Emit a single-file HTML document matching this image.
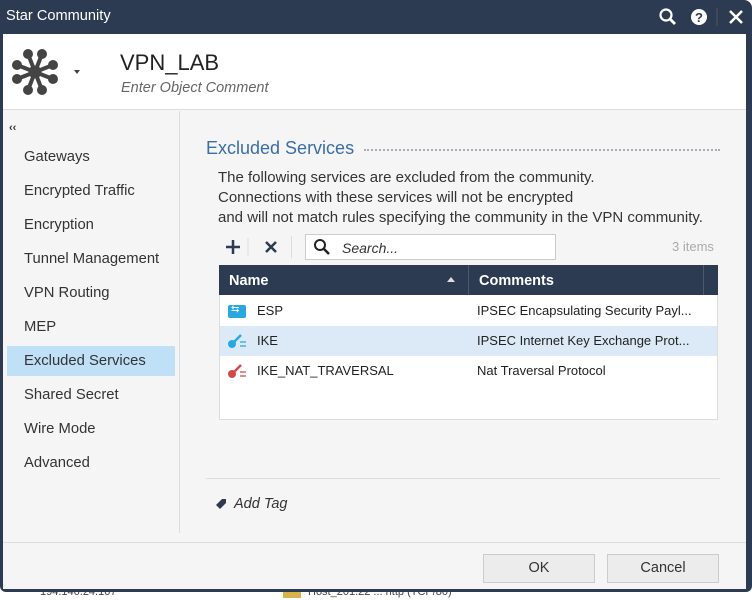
<!DOCTYPE html>
<html><head><meta charset="utf-8"><style>
*{margin:0;padding:0;box-sizing:border-box}
body{width:752px;height:600px;overflow:hidden;background:#fff;font-family:"Liberation Sans",sans-serif;position:relative;color:#222}
.abs{position:absolute}
.frame{left:0;top:0;width:752px;height:592px;background:#2c3b51;border-radius:0 8px 6px 6px}
.title{left:6px;top:8px;color:#fff;font-size:14.6px}
.body{left:3px;top:34px;width:743px;height:555px;background:#f5f5f5}
.hdr{left:3px;top:34px;width:743px;height:76px;background:#fff;border-bottom:1px solid #ddd}
.side{left:3px;top:111px;width:177px;height:422px;border-right:1px solid #ddd}
.nav{left:7px;width:168px;height:30px;font-size:14.8px;padding-left:17px;line-height:30px;color:#333}
.sel{background:#bfe0f7}
.txt{font-size:15px;color:#333;line-height:20px}
.tb{left:219px;top:265px;width:499px;height:155px;background:#fff;border:1px solid #ddd}
.th{left:219px;top:265px;width:499px;height:30px;background:#2c3b51;color:#fff;font-weight:bold;font-size:14.5px}
.row{left:220px;width:497px;height:30px;font-size:13px;line-height:30px}
.btn{top:554px;width:112px;height:29px;background:#ececec;border:1px solid #ccc;font-size:14.5px;text-align:center;line-height:27px;color:#333}
</style></head><body>
<div class="abs" style="left:0;top:592px;width:752px;height:8px;background:#fff;font-size:11px;color:#444;overflow:hidden"><span style="position:absolute;left:40px;top:-6px">194.146.24.107</span><span style="position:absolute;left:283px;top:-4px;width:18px;height:10px;background:#d9b24a"></span><span style="position:absolute;left:308px;top:-6px">Host_201.22 ... http (TCP/80)</span></div>
<div class="abs frame"></div>
<div class="abs title">Star Community</div>
<svg class="abs" style="left:658px;top:7px" width="90" height="20" viewBox="0 0 90 20">
<circle cx="8" cy="8" r="5.5" fill="none" stroke="#fff" stroke-width="2.2"/><line x1="12" y1="12" x2="17" y2="17" stroke="#fff" stroke-width="2.8"/>
<circle cx="41" cy="10" r="8" fill="#fff"/><text x="41" y="15" text-anchor="middle" font-family="Liberation Sans" font-weight="bold" font-size="13" fill="#2c3b51">?</text>
<line x1="59" y1="1" x2="59" y2="19" stroke="#556" stroke-width="1"/>
<path d="M72 4L84 16M84 4L72 16" stroke="#fff" stroke-width="2.6"/>
</svg>
<div class="abs body"></div>
<div class="abs hdr"></div>
<svg class="abs" style="left:11px;top:48px" width="48" height="48" viewBox="0 0 48 48" fill="#444" stroke="#444">
<g stroke-width="4"><line x1="17" y1="6" x2="31" y2="42"/><line x1="31" y1="6" x2="17" y2="42"/><line x1="6" y1="17" x2="42" y2="31"/><line x1="6" y1="31" x2="42" y2="17"/></g>
<circle cx="24" cy="24" r="6"/><circle cx="17" cy="6" r="4.5"/><circle cx="31" cy="6" r="4.5"/><circle cx="17" cy="42" r="4.5"/><circle cx="31" cy="42" r="4.5"/><circle cx="6" cy="17" r="4.5"/><circle cx="6" cy="31" r="4.5"/><circle cx="42" cy="17" r="4.5"/><circle cx="42" cy="31" r="4.5"/>
</svg>
<div class="abs" style="left:74px;top:70px;width:0;height:0;border-left:3px solid transparent;border-right:3px solid transparent;border-top:4px solid #444"></div>
<div class="abs" style="left:120px;top:50px;font-size:22px;color:#222">VPN_LAB</div>
<div class="abs" style="left:121px;top:80px;font-size:14.5px;font-style:italic;color:#666">Enter Object Comment</div>
<div class="abs side"></div>
<div class="abs" style="left:9px;top:122px;font-size:11px;color:#333;font-weight:bold">‹‹</div>
<div class="abs nav" style="top:142px">Gateways</div>
<div class="abs nav" style="top:176px">Encrypted Traffic</div>
<div class="abs nav" style="top:210px">Encryption</div>
<div class="abs nav" style="top:244px">Tunnel Management</div>
<div class="abs nav" style="top:278px">VPN Routing</div>
<div class="abs nav" style="top:312px">MEP</div>
<div class="abs nav sel" style="top:346px">Excluded Services</div>
<div class="abs nav" style="top:380px">Shared Secret</div>
<div class="abs nav" style="top:414px">Wire Mode</div>
<div class="abs nav" style="top:448px">Advanced</div>
<div class="abs" style="left:206px;top:138px;font-size:18px;color:#3a6ea5">Excluded Services</div>
<div class="abs" style="left:364px;top:149px;width:356px;border-top:2px dotted #aab"></div>
<div class="abs txt" style="left:218px;top:168px">The following services are excluded from the community.<br>Connections with these services will not be encrypted<br>and will not match rules specifying the community in the VPN community.</div>
<svg class="abs" style="left:224px;top:238px" width="60" height="18" viewBox="0 0 60 18"><path d="M9 2V16M2 9H16" stroke="#2c3b51" stroke-width="2.5"/><line x1="24" y1="0" x2="24" y2="18" stroke="#ddd"/><path d="M42 4L52 14M52 4L42 14" stroke="#2c3b51" stroke-width="2.5"/></svg>
<div class="abs" style="left:291px;top:236px;height:22px;border-left:1px solid #ddd"></div>
<div class="abs" style="left:305px;top:234px;width:251px;height:26px;background:#fff;border:1px solid #ccc"></div>
<svg class="abs" style="left:313px;top:238px" width="18" height="18"><circle cx="7" cy="7" r="5" fill="none" stroke="#222" stroke-width="2"/><line x1="11" y1="11" x2="16" y2="16" stroke="#222" stroke-width="2.5"/></svg>
<div class="abs" style="left:342px;top:240px;font-size:14px;font-style:italic;color:#333">Search...</div>
<div class="abs" style="left:672px;top:239px;font-size:13px;color:#aaa">3 items</div>
<div class="abs tb"></div>
<div class="abs th"><span style="position:absolute;left:10px;top:8px">Name</span><span style="position:absolute;left:228px;top:12px;width:0;height:0;border-left:4px solid transparent;border-right:4px solid transparent;border-bottom:5px solid #ddd"></span><span style="position:absolute;left:249px;top:0;height:30px;border-left:1px solid #4a5a70"></span><span style="position:absolute;left:260px;top:8px">Comments</span><span style="position:absolute;left:484px;top:0;height:30px;border-left:1px solid #4a5a70"></span></div>
<div class="abs row" style="top:296px"><span style="position:absolute;left:8px;top:9px;width:18px;height:13px;background:#29a8e0;border-radius:2px"></span><span style="position:absolute;left:11px;top:4px;color:#fff;font-size:10px;line-height:20px">⇆</span><span style="position:absolute;left:37px">ESP</span><span style="position:absolute;left:257px">IPSEC Encapsulating Security Payl...</span></div>
<div class="abs row" style="top:326px;background:#dbeaf6"><svg style="position:absolute;left:7px;top:7px" width="20" height="16"><circle cx="5" cy="11" r="4" fill="#29a8e0"/><line x1="7" y1="9" x2="14" y2="2" stroke="#29a8e0" stroke-width="2.5"/><path d="M13 9h6M13 13h6" stroke="#29a8e0" stroke-width="1.3"/></svg><span style="position:absolute;left:37px">IKE</span><span style="position:absolute;left:257px">IPSEC Internet Key Exchange Prot...</span></div>
<div class="abs row" style="top:356px"><svg style="position:absolute;left:7px;top:7px" width="20" height="16"><circle cx="5" cy="11" r="4" fill="#d04a4a"/><line x1="7" y1="9" x2="14" y2="2" stroke="#d04a4a" stroke-width="2.5"/><path d="M13 9h6M13 13h6" stroke="#d04a4a" stroke-width="1.3"/></svg><span style="position:absolute;left:37px">IKE_NAT_TRAVERSAL</span><span style="position:absolute;left:257px">Nat Traversal Protocol</span></div>
<div class="abs" style="left:206px;top:478px;width:514px;border-top:1px solid #ddd"></div>
<svg class="abs" style="left:214px;top:497px" width="14" height="14"><path d="M2 8L8 2H12V6L6 12Z" fill="#2c3b51"/></svg>
<div class="abs" style="left:234px;top:496px;font-size:14.5px;font-style:italic;color:#333">Add Tag</div>
<div class="abs" style="left:3px;top:542px;width:743px;border-top:1px solid #ddd"></div>
<div class="abs btn" style="left:483px">OK</div>
<div class="abs btn" style="left:607px">Cancel</div>
</body></html>
